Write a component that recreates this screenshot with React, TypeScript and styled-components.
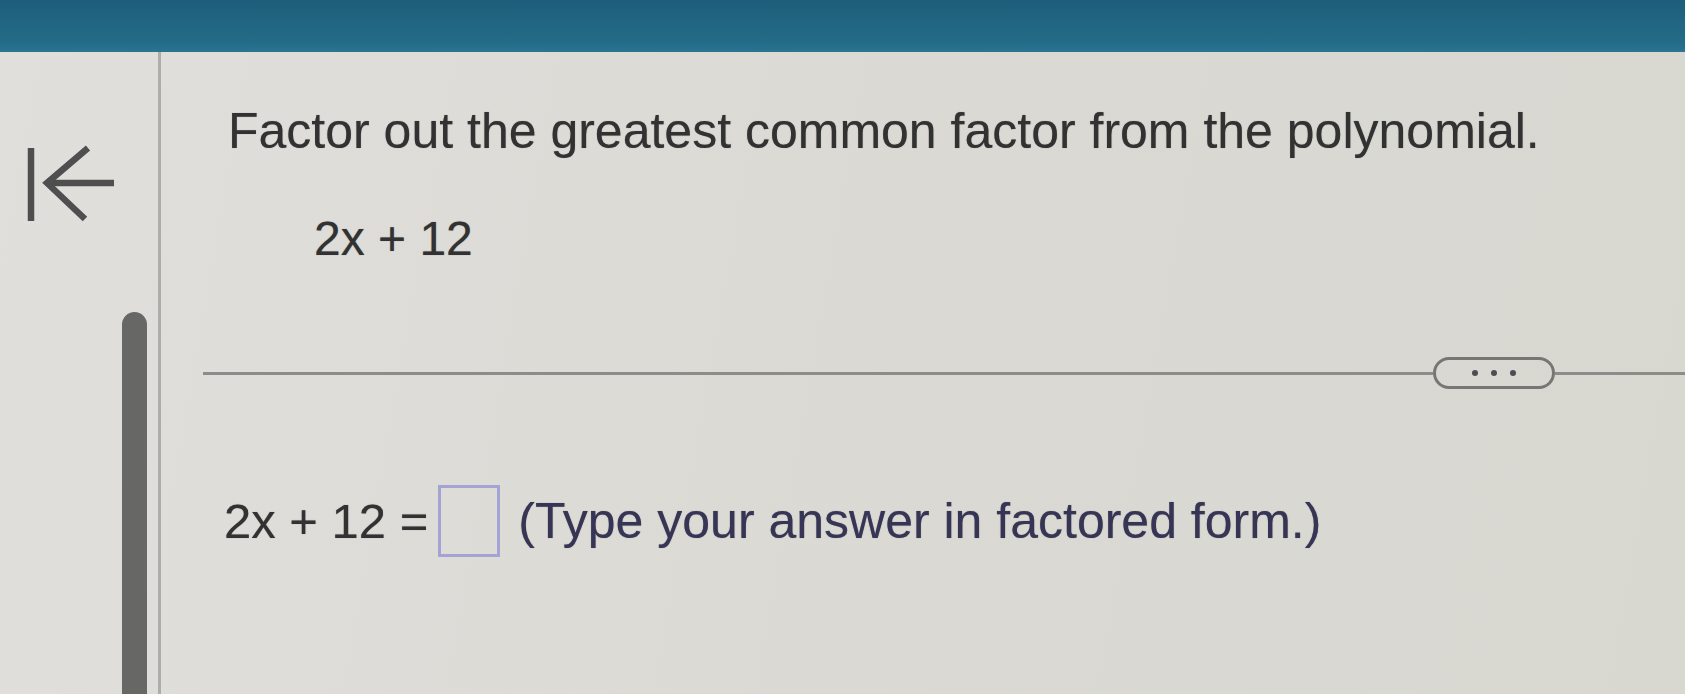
import React from "react";
import styled, { createGlobalStyle } from "styled-components";

const GlobalStyle = createGlobalStyle`
  html, body {
    margin: 0;
    padding: 0;
    height: 100%;
    overflow: hidden;
  }
  body {
    font-family: "Liberation Sans", Arial, sans-serif;
    background: #dcdbd6;
  }
  #root {
    height: 100%;
  }
`;

const Page = styled.div`
  height: 100%;
  display: flex;
  flex-direction: column;
  background: linear-gradient(100deg, #e0dfdb 0%, #dad9d4 55%, #d8d8d1 100%);
`;

const TopBar = styled.div`
  height: 52px;
  flex: 0 0 52px;
  background: linear-gradient(180deg, #1d5e7a 0%, #246c89 85%, #2b7591 100%);
`;

const Body = styled.div`
  flex: 1;
  display: flex;
  min-height: 0;
`;

const Rail = styled.div`
  width: 158px;
  flex: 0 0 158px;
  border-right: 3px solid #adadab;
  display: flex;
  flex-direction: column;
`;

const BackButton = styled.button`
  margin-top: 93px;
  margin-left: 25px;
  padding: 0;
  border: none;
  background: none;
  width: 92px;
  height: 80px;
  cursor: pointer;
  align-self: flex-start;
`;

const Thumb = styled.div`
  margin-top: 87px;
  margin-right: 11px;
  align-self: flex-end;
  flex: 1;
  width: 25px;
  background: #676765;
  border-radius: 13px 13px 0 0;
`;

const Content = styled.div`
  flex: 1;
  padding-top: 51px;
  padding-left: 42px;
  display: flex;
  flex-direction: column;
  color: #323232;
  text-shadow: 0 0 1px rgba(30, 30, 30, 0.45);
`;

const Title = styled.div`
  font-size: 50px;
  line-height: 56px;
  padding-left: 25px;
  white-space: nowrap;
`;

const Expression = styled.div`
  margin-top: 52px;
  padding-left: 111px;
  font-size: 48px;
  line-height: 56px;
`;

const DividerRow = styled.div`
  margin-top: 90px;
  height: 32px;
  display: flex;
  align-items: center;
`;

const Line = styled.div<{ $width?: number }>`
  height: 3px;
  background: #8c8c8b;
  flex: ${(p) => (p.$width ? `0 0 ${p.$width}px` : "1")};
`;

const MoreButton = styled.button`
  width: 122px;
  height: 32px;
  flex: 0 0 122px;
  border: 3px solid #767675;
  border-radius: 16px;
  background: transparent;
  display: flex;
  align-items: center;
  justify-content: center;
  gap: 13px;
  padding: 0;
  cursor: pointer;
`;

const Dot = styled.span`
  width: 6px;
  height: 6px;
  border-radius: 50%;
  background: #4e4c55;
`;

const AnswerRow = styled.div`
  margin-top: 96px;
  padding-left: 21px;
  display: flex;
  align-items: center;
  font-size: 49px;
  line-height: 56px;
  white-space: nowrap;
`;

const AnswerBox = styled.span`
  width: 56px;
  height: 66px;
  margin: 0 18px 0 10px;
  border: 3px solid #a3a3d6;
`;

const Hint = styled.span`
  font-size: 50px;
  color: #373555;
`;

function BackIcon() {
  return (
    <svg width="92" height="80" viewBox="0 0 92 80" fill="none">
      <g stroke="#4f4f50" strokeWidth="6.5">
        <line x1="6" y1="3" x2="6" y2="76" />
        <line x1="22" y1="38" x2="89" y2="38" />
        <polyline points="63,3 22,38 60,74" strokeLinejoin="miter" />
      </g>
    </svg>
  );
}

export default function App() {
  return (
    <>
      <GlobalStyle />
      <Page>
        <TopBar />
        <Body>
          <Rail>
            <BackButton aria-label="Back">
              <BackIcon />
            </BackButton>
            <Thumb />
          </Rail>
          <Content>
            <Title>Factor out the greatest common factor from the polynomial.</Title>
            <Expression>2x + 12</Expression>
            <DividerRow>
              <Line />
              <MoreButton aria-label="More">
                <Dot />
                <Dot />
                <Dot />
              </MoreButton>
              <Line $width={130} />
            </DividerRow>
            <AnswerRow>
              <span>2x + 12 =</span>
              <AnswerBox />
              <Hint>(Type your answer in factored form.)</Hint>
            </AnswerRow>
          </Content>
        </Body>
      </Page>
    </>
  );
}
